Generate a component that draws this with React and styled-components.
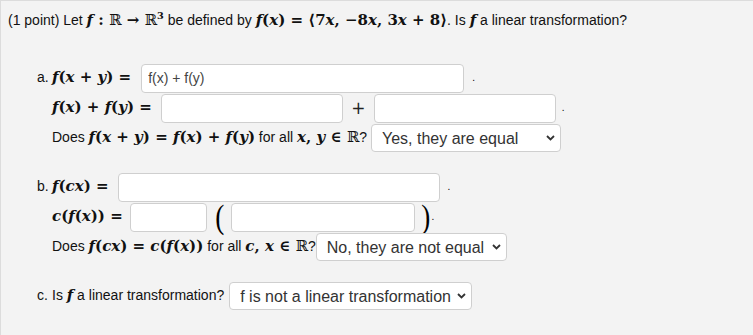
import React from 'react'
import styled, { createGlobalStyle } from 'styled-components'

const GlobalStyle = createGlobalStyle`
  html, body {
    margin: 0;
    padding: 0;
    background: #f3f3f3;
  }
`

const Page = styled.div`
  min-height: 335px;
  box-sizing: border-box;
  background: #f3f3f3;
  border-top: 1px solid #dcdcdc;
  border-left: 1px solid #dcdcdc;
  padding: 8px 0 0 7px;
  font-family: "Liberation Sans", Arial, sans-serif;
  font-size: 14px;
  color: #111;
`

const Title = styled.div`
  line-height: 22px;
  height: 22px;
  white-space: nowrap;
`

const Part = styled.div`
  display: flex;
  margin-top: ${p => p.$top || 19}px;
  padding-left: 29px;
`

const Label = styled.div`
  width: 15px;
  line-height: 30px;
`

const Rows = styled.div`
  display: flex;
  flex-direction: column;
`

const Row = styled.div`
  height: 30px;
  line-height: 30px;
  white-space: nowrap;
`

const M = styled.span`
  font-family: "DejaVu Serif", "Liberation Serif", serif;
  font-size: 15px;
  font-weight: 700;
`

const V = styled.i`
  font-style: italic;
`

const BB = styled.span`
  font-weight: 400;
`

const Sup = styled.sup`
  font-size: 0.65em;
  vertical-align: 0.6em;
  line-height: 0;
`

const Input = styled.input`
  box-sizing: border-box;
  vertical-align: middle;
  width: ${p => p.$w}px;
  height: 29px;
  margin: 0 0 0 ${p => p.$ml ?? 9}px;
  padding: 0 6px;
  background: #fff;
  border: 1px solid #cfcfcf;
  border-radius: 4px;
  font-family: "Liberation Sans", Arial, sans-serif;
  font-size: 14px;
  color: #444;
  outline: none;
`

const Dot = styled.span`
  margin-left: ${p => p.$ml ?? 8}px;
  font-size: 10px;
  color: #000;
  vertical-align: middle;
`

const Plus = styled.span`
  display: inline-block;
  vertical-align: middle;
  font-family: "DejaVu Sans", sans-serif;
  font-size: 17px;
  width: 31px;
  text-align: center;
  color: #222;
`

const BigParen = styled.span`
  display: inline-block;
  vertical-align: middle;
  font-family: "Liberation Serif", serif;
  font-size: 34px;
  line-height: 30px;
  transform: scaleX(0.8);
  margin: ${p => p.$m};
  color: #000;
`

const SelectWrap = styled.span`
  position: relative;
  display: inline-block;
  vertical-align: middle;
  margin-left: ${p => p.$ml ?? 4}px;
  line-height: 0;
`

const Select = styled.select`
  appearance: none;
  box-sizing: border-box;
  width: ${p => p.$w}px;
  height: 28px;
  margin: 0;
  padding: 0 0 0 10px;
  background: #fff;
  border: 1px solid #cfcfcf;
  border-radius: 4px;
  font-family: "Liberation Sans", Arial, sans-serif;
  font-size: 16px;
  color: #333;
  outline: none;
`

const Chevron = styled.svg`
  position: absolute;
  right: 6px;
  top: 11px;
  pointer-events: none;
`

const Dropdown = ({ w, ml, value }) => (
  <SelectWrap $ml={ml}>
    <Select $w={w} defaultValue={value}>
      <option>{value}</option>
    </Select>
    <Chevron width="9" height="6" viewBox="0 0 9 6">
      <path d="M1 1l3.5 3.5L8 1" fill="none" stroke="#333" strokeWidth="1.8" />
    </Chevron>
  </SelectWrap>
)

const R = () => <BB>ℝ</BB>

export default function App() {
  return (
    <>
      <GlobalStyle />
      <Page>
        <Title>
          {'(1 point) Let '}
          <M>
            <V>f</V> : <R /> → <R />
            <Sup>3</Sup>
          </M>
          {' be defined by '}
          <M>
            <V>f</V>(<V>x</V>) = ⟨7<V>x</V>, −8<V>x</V>, 3<V>x</V> + 8⟩
          </M>
          {'. Is '}
          <M><V>f</V></M>
          {' a linear transformation?'}
        </Title>

        <Part $top={31}>
          <Label>a.</Label>
          <Rows>
            <Row>
              <M><V>f</V>(<V>x</V> + <V>y</V>) =</M>
              <Input $w={323} $ml={10} defaultValue="f(x) + f(y)" />
              <Dot>.</Dot>
            </Row>
            <Row>
              <M><V>f</V>(<V>x</V>) + <V>f</V>(<V>y</V>) =</M>
              <Input $w={182} />
              <Plus>+</Plus>
              <Input $w={182} $ml={0} />
              <Dot $ml={6}>.</Dot>
            </Row>
            <Row>
              {'Does '}
              <M><V>f</V>(<V>x</V> + <V>y</V>) = <V>f</V>(<V>x</V>) + <V>f</V>(<V>y</V>)</M>
              {' for all '}
              <M><V>x</V>, <V>y</V> ∈ <R /></M>
              {'?'}
              <Dropdown w={190} value="Yes, they are equal" />
            </Row>
          </Rows>
        </Part>

        <Part>
          <Label>b.</Label>
          <Rows>
            <Row>
              <M><V>f</V>(<V>cx</V>) =</M>
              <Input $w={322} />
              <Dot>.</Dot>
            </Row>
            <Row>
              <M><V>c</V>(<V>f</V>(<V>x</V>)) =</M>
              <Input $w={77} $ml={7} />
              <BigParen $m="0 6px 0 7px">(</BigParen>
              <Input $w={184} $ml={0} />
              <BigParen $m="0 0 0 5px">)</BigParen>
              <Dot $ml={0}>.</Dot>
            </Row>
            <Row>
              {'Does '}
              <M><V>f</V>(<V>cx</V>) = <V>c</V>(<V>f</V>(<V>x</V>))</M>
              {' for all '}
              <M><V>c</V>, <V>x</V> ∈ <R /></M>
              {'?'}
              <Dropdown w={191} ml={0} value="No, they are not equal" />
            </Row>
          </Rows>
        </Part>

        <Part>
          <Label>c.</Label>
          <Rows>
            <Row>
              {'Is '}
              <M><V>f</V></M>
              {' a linear transformation?'}
              <Dropdown w={243} ml={5} value="f is not a linear transformation" />
            </Row>
          </Rows>
        </Part>
      </Page>
    </>
  )
}
